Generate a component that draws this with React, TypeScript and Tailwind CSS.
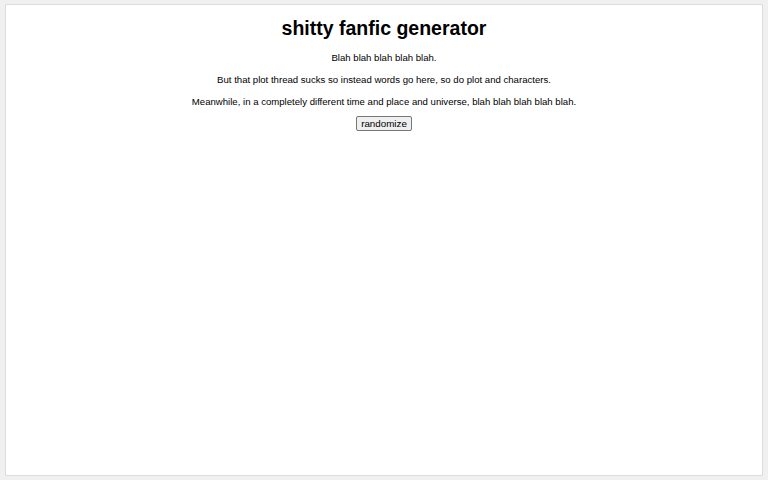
export default function App() {
  return (
    <div className="h-[480px] bg-[#f0f0f0] px-[5px] pt-[4px] pb-[4px] font-['Liberation_Sans',Arial,sans-serif]">
      <div className="h-full bg-white border border-[#dcdcdc] flex flex-col items-center text-black">
        <h1 className="mt-[11px] text-[19.5px] leading-[24px] font-bold">shitty fanfic generator</h1>
        <p className="mt-[12px] text-[9.6px] leading-[12px]">Blah blah blah blah blah.</p>
        <p className="mt-[10px] text-[9.6px] leading-[12px]">
          But that plot thread sucks so instead words go here, so do plot and characters.
        </p>
        <p className="mt-[10px] text-[9.6px] leading-[12px]">
          Meanwhile, in a completely different time and place and universe, blah blah blah blah blah.
        </p>
        <button className="mt-[8px] px-[4px] h-[15px] text-[9.8px] leading-[12px] border border-[#767676] rounded-[2px] bg-[#efefef]">
          randomize
        </button>
      </div>
    </div>
  );
}
